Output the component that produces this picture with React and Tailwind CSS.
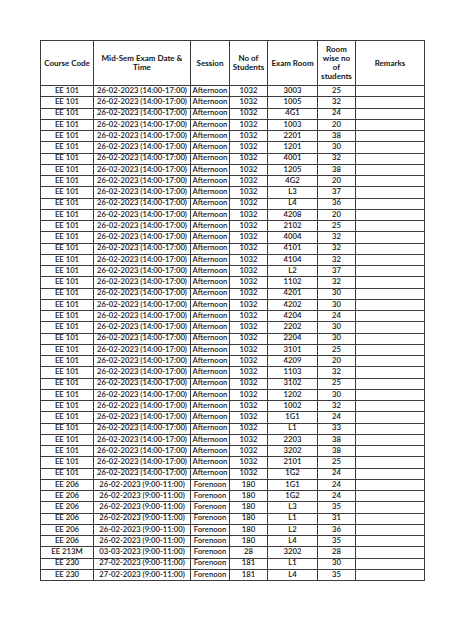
import React from 'react';

const cols = 'grid grid-cols-[53px_97px_39px_38px_50px_38px_69px]';

const afternoon = [
  ['3003', '25'], ['1005', '32'], ['4G1', '24'], ['1003', '20'], ['2201', '38'],
  ['1201', '30'], ['4001', '32'], ['1205', '38'], ['4G2', '20'], ['L3', '37'],
  ['L4', '36'], ['4208', '20'], ['2102', '25'], ['4004', '32'], ['4101', '32'],
  ['4104', '32'], ['L2', '37'], ['1102', '32'], ['4201', '30'], ['4202', '30'],
  ['4204', '24'], ['2202', '30'], ['2204', '30'], ['3101', '25'], ['4209', '20'],
  ['1103', '32'], ['3102', '25'], ['1202', '30'], ['1002', '32'], ['1G1', '24'],
  ['L1', '33'], ['2203', '38'], ['3202', '38'], ['2101', '25'], ['1G2', '24'],
];

const rows = [
  ...afternoon.map(([room, n]) => ({
    code: 'EE 101',
    date: '26-02-2023 (14:00-17:00)',
    session: 'Afternoon',
    total: '1032',
    room,
    n,
  })),
  ...[['1G1', '24'], ['1G2', '24'], ['L3', '35'], ['L1', '31'], ['L2', '36'], ['L4', '35']].map(([room, n]) => ({
    code: 'EE 206',
    date: '26-02-2023 (9:00-11:00)',
    session: 'Forenoon',
    total: '180',
    room,
    n,
  })),
  { code: 'EE 213M', date: '03-03-2023 (9:00-11:00)', session: 'Forenoon', total: '28', room: '3202', n: '28' },
  { code: 'EE 230', date: '27-02-2023 (9:00-11:00)', session: 'Forenoon', total: '181', room: 'L1', n: '30' },
  { code: 'EE 230', date: '27-02-2023 (9:00-11:00)', session: 'Forenoon', total: '181', room: 'L4', n: '35' },
];

const Cell = ({ children, className = '' }) => (
  <div className={`flex items-center justify-center border-r border-b border-[#3c3c3c] overflow-hidden ${className}`}>
    {children}
  </div>
);

const App = () => {
  return (
    <div className="w-[474px] h-[632px] bg-white pt-[40px] pl-[40px] font-['Lato','Liberation_Sans',sans-serif] text-[#151515]">
      <div className="w-[385px] border-l border-t border-[#3c3c3c]">
        {/* Header */}
        <div className={`${cols} h-[45px] text-[8px] font-bold leading-[9px] text-center`}>
          <Cell>Course Code</Cell>
          <Cell className="px-1">Mid-Sem Exam Date &amp;<br />Time</Cell>
          <Cell>Session</Cell>
          <Cell>No of<br />Students</Cell>
          <Cell>Exam Room</Cell>
          <Cell>Room<br />wise no<br />of<br />students</Cell>
          <Cell>Remarks</Cell>
        </div>

        {/* Rows */}
        <div className={`${cols} auto-rows-[11.25px] text-[7.7px] leading-none font-semibold whitespace-nowrap`}>
          {rows.map((r, i) => (
            <React.Fragment key={i}>
              <Cell className="pb-px">{r.code}</Cell>
              <Cell className="pb-px">{r.date}</Cell>
              <Cell className="pb-px">{r.session}</Cell>
              <Cell className="pb-px">{r.total}</Cell>
              <Cell className="pb-px">{r.room}</Cell>
              <Cell className="pb-px">{r.n}</Cell>
              <Cell />
            </React.Fragment>
          ))}
        </div>
      </div>
    </div>
  );
};

export default App;
